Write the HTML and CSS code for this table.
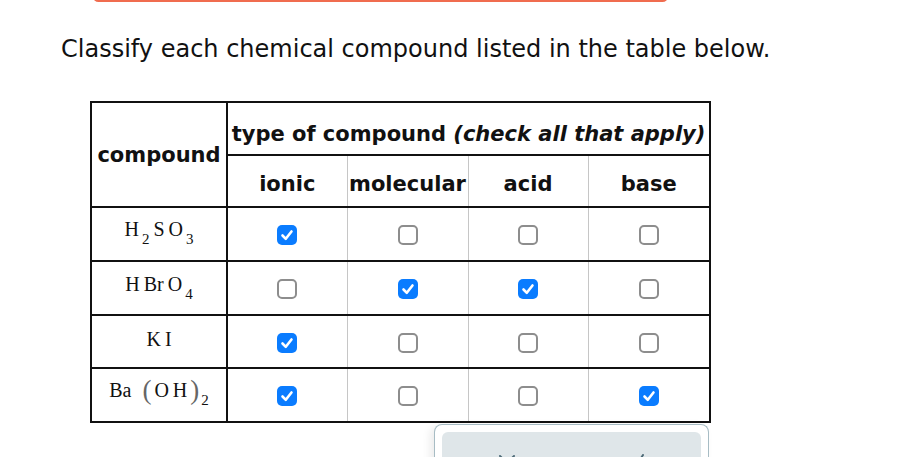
FILE: index.html
```html
<!DOCTYPE html>
<html>
<head>
<meta charset="utf-8">
<link rel="stylesheet" href="styles.css">
</head>
<body>
<div class="topclip"><div class="topbar"></div></div>
<p class="prompt">Classify each chemical compound listed in the table below.</p>
<table class="grid">
  <colgroup>
    <col class="c-comp"><col class="c-ionic"><col class="c-mol"><col class="c-acid"><col class="c-base">
  </colgroup>
  <thead>
    <tr class="h1">
      <th rowspan="2" class="comp-head">compound</th>
      <th colspan="4" class="type-head">type of compound <i>(check all that apply)</i></th>
    </tr>
    <tr class="h2">
      <th>ionic</th><th>molecular</th><th>acid</th><th>base</th>
    </tr>
  </thead>
  <tbody>
    <tr class="r1">
      <td class="formula"><span class="el">H</span><sub>2</sub><span class="el">S</span><span class="el">O</span><sub>3</sub></td>
      <td><span class="cb on"><svg viewBox="0 0 20 20"><path d="M5.5 10.5 L8.8 13.8 L14.5 6.5"/></svg></span></td>
      <td><span class="cb"></span></td>
      <td><span class="cb"></span></td>
      <td><span class="cb"></span></td>
    </tr>
    <tr class="r2">
      <td class="formula"><span class="el">H</span><span class="el">Br</span><span class="el">O</span><sub>4</sub></td>
      <td><span class="cb"></span></td>
      <td><span class="cb on"><svg viewBox="0 0 20 20"><path d="M5.5 10.5 L8.8 13.8 L14.5 6.5"/></svg></span></td>
      <td><span class="cb on"><svg viewBox="0 0 20 20"><path d="M5.5 10.5 L8.8 13.8 L14.5 6.5"/></svg></span></td>
      <td><span class="cb"></span></td>
    </tr>
    <tr class="r3">
      <td class="formula"><span class="el">K</span><span class="el">I</span></td>
      <td><span class="cb on"><svg viewBox="0 0 20 20"><path d="M5.5 10.5 L8.8 13.8 L14.5 6.5"/></svg></span></td>
      <td><span class="cb"></span></td>
      <td><span class="cb"></span></td>
      <td><span class="cb"></span></td>
    </tr>
    <tr class="r4">
      <td class="formula"><span class="el ba">Ba</span><span class="paren">(</span><span class="el">O</span><span class="el">H</span><span class="paren">)</span><sub>2</sub></td>
      <td><span class="cb on"><svg viewBox="0 0 20 20"><path d="M5.5 10.5 L8.8 13.8 L14.5 6.5"/></svg></span></td>
      <td><span class="cb"></span></td>
      <td><span class="cb"></span></td>
      <td><span class="cb on"><svg viewBox="0 0 20 20"><path d="M5.5 10.5 L8.8 13.8 L14.5 6.5"/></svg></span></td>
    </tr>
  </tbody>
</table>
<div class="panel">
  <div class="panel-inner">
    <div class="btn">
      <svg class="ico" viewBox="0 0 18 18"><path d="M2 2 L16 16 M16 2 L2 16"/></svg>
    </div>
    <div class="btn">
      <svg class="ico" viewBox="0 0 18 18"><path d="M2 10 L7 15 L16 1"/></svg>
    </div>
  </div>
</div>
</body>
</html>
```
FILE: styles.css
```css
html, body {
  margin: 0;
  padding: 0;
  background: #ffffff;
  overflow: hidden;
}
body {
  width: 914px;
  height: 457px;
  font-family: "DejaVu Sans", Verdana, sans-serif;
  color: #000;
}
.topclip {
  height: 3px;
  overflow: hidden;
}
.topbar {
  margin: -9px 0 0 93px;
  width: 575px;
  height: 11px;
  background: #f06c4f;
  border-radius: 10px;
}
.prompt {
  margin: 32px 0 0 61px;
  font-size: 24px;
  line-height: 29px;
  color: #111;
}
.grid {
  margin: 37px 0 0 90px;
  border-collapse: collapse;
  table-layout: fixed;
  width: 619px;
}
.c-comp { width: 136px; }
.c-ionic { width: 120px; }
.c-mol { width: 121px; }
.c-acid { width: 120px; }
.c-base { width: 122px; }
.grid th,
.grid td {
  padding: 0;
  text-align: center;
  vertical-align: top;
  border-top: 2px solid #111;
  border-bottom: 2px solid #111;
  border-left: 1px solid #c6c6c6;
  border-right: 1px solid #c6c6c6;
}
.grid th:first-child,
.grid td:first-child {
  border-left: 2px solid #111;
  border-right: 2px solid #111;
}
.grid th:last-child,
.grid td:last-child {
  border-right: 2px solid #111;
}
.grid th {
  font-size: 21px;
  font-weight: bold;
  line-height: 24px;
  white-space: nowrap;
  color: #111;
}
.grid .h2 th:first-child {
  border-right: 1px solid #c6c6c6;
}
.grid .comp-head {
  padding-top: 40px;
  text-align: center;
}
.grid .type-head {
  padding-top: 19px;
  border-right: 2px solid #111;
}
.type-head i {
  font-style: italic;
}
.h1 { height: 53px; }
.h2 { height: 52px; }
.grid .h2 th { padding-top: 16px; }
.r1 { height: 54px; }
.r2 { height: 54px; }
.r3 { height: 53px; }
.r4 { height: 54px; }
.grid td {
  padding-top: 17px;
}
.grid td.formula {
  padding-top: 11px;
  font-family: "Liberation Serif", "Times New Roman", serif;
  font-size: 20px;
  line-height: 20px;
  color: #111;
}
.grid .r2 td.formula { padding-top: 12px; }
.grid .r3 td.formula { padding-top: 13px; }
.grid .r4 td.formula { padding-top: 11px; }
.el { margin: 0 2px; }
.formula sub {
  font-size: 15px;
  vertical-align: -8px;
  line-height: 0;
  margin: 0 2px 0 1px;
}
.ba { margin-right: 10px; }
.paren {
  font-size: 27px;
  color: #666;
  vertical-align: -2px;
  line-height: 0;
  margin: 0 1px;
}
.cb {
  display: block;
  box-sizing: border-box;
  width: 20px;
  height: 20px;
  margin: 0 auto;
  border: 2px solid #8d8d8d;
  border-radius: 5px;
  background: #fff;
}
.cb.on {
  border: none;
  background: #0a7cff;
}
.cb svg {
  display: block;
  width: 20px;
  height: 20px;
}
.cb svg path {
  fill: none;
  stroke: #fff;
  stroke-width: 2.6;
  stroke-linecap: round;
  stroke-linejoin: round;
}
.panel {
  margin: 1px 0 0 434px;
  width: 275px;
  height: 40px;
  box-sizing: border-box;
  border: 1px solid #a7bcc4;
  border-bottom: none;
  border-radius: 8px 8px 0 0;
  padding: 7px 7px 0 7px;
  background: #fff;
  box-shadow: -4px 2px 8px rgba(0, 0, 0, 0.08);
}
.panel-inner {
  display: flex;
  height: 40px;
  background: #dfe6e9;
  border-radius: 6px;
}
.btn {
  flex: 1;
  display: flex;
  justify-content: center;
  padding-top: 22px;
}
.ico {
  width: 18px;
  height: 18px;
}
.ico path {
  fill: none;
  stroke: #4d6a77;
  stroke-width: 2;
  stroke-linecap: round;
  stroke-linejoin: round;
}
```
